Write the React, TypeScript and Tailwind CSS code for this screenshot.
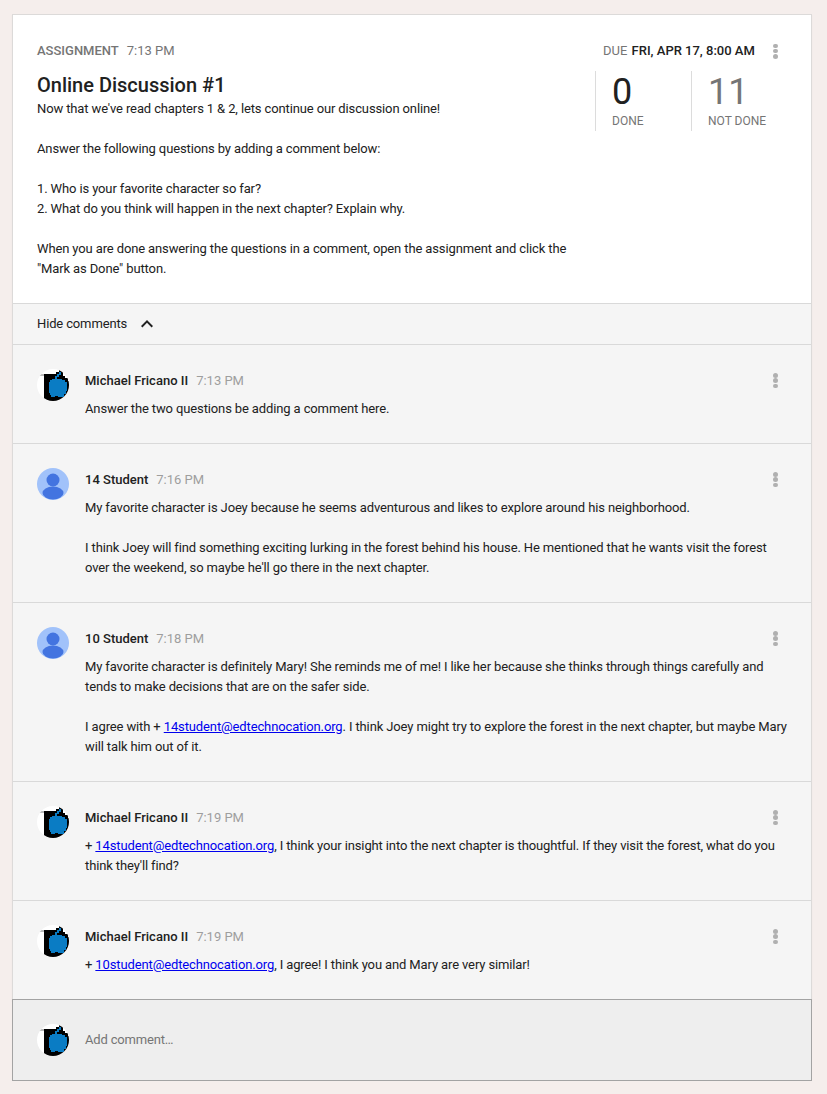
import type { ReactNode } from "react"

function Dots() {
  return (
    <div className="flex h-[15px] w-[5px] shrink-0 flex-col justify-between">
      <span className="h-[4.5px] w-[4.5px] rounded-full bg-[#b0b0b0]" />
      <span className="h-[4.5px] w-[4.5px] rounded-full bg-[#b0b0b0]" />
      <span className="h-[4.5px] w-[4.5px] rounded-full bg-[#b0b0b0]" />
    </div>
  )
}

function TeacherAvatar() {
  return (
    <svg width="32" height="32" viewBox="0 0 32 32" className="shrink-0">
      <defs>
        <clipPath id="avatar-clip">
          <circle cx="16" cy="16" r="16" />
        </clipPath>
      </defs>
      <g clipPath="url(#avatar-clip)">
        <rect width="32" height="32" fill="#ffffff" />
        <rect x="1" y="5.5" width="7" height="1" fill="#777777" />
        <path d="M7 5H19V3H22V0H26V7H28V9H31V12H32V26H30V29H26V32H7Z" fill="#000000" shapeRendering="crispEdges" />
        <path
          d="M18 7H20V5H22V3H24V6H22V8H20V10H25V11H28V13H30V22H29V25H27V28H21V27H18V28H14V26H13V24H12V13H13V11H15V10H18Z"
          fill="#0a7cc4"
          shapeRendering="crispEdges"
        />
      </g>
    </svg>
  )
}

function StudentAvatar() {
  return (
    <svg width="32" height="32" viewBox="0 0 32 32" className="shrink-0">
      <circle cx="16" cy="16" r="16" fill="#a1c2fa" />
      <circle cx="16" cy="12" r="6.5" fill="#4374e0" />
      <ellipse cx="16" cy="25" rx="10.5" ry="6.5" fill="#4374e0" />
    </svg>
  )
}

function Comment({
  name,
  time,
  student,
  children,
}: {
  name: string
  time: string
  student?: boolean
  children: ReactNode
}) {
  return (
    <div className="flex gap-4 border-b border-[#d9d9d9] pb-[24px] pl-6 pr-[33px] pt-6">
      {student ? <StudentAvatar /> : <TeacherAvatar />}
      <div className="mt-px min-w-0 flex-1">
        <div className="flex h-[21px] items-center justify-between">
          <div className="flex items-baseline gap-2">
            <span className="text-[13px] font-medium text-[#212121]">{name}</span>
            <span className="text-[13px] text-[#9e9e9e]">{time}</span>
          </div>
          <Dots />
        </div>
        <div className="-mr-[10px] mt-[8px] text-[13px] leading-[20px] tracking-[-0.125px] text-[#212121]">{children}</div>
      </div>
    </div>
  )
}

function Mention({ children }: { children: ReactNode }) {
  return <span className="text-[#0000ee] underline">{children}</span>
}

export default function App() {
  return (
    <div className="min-h-screen bg-[#f5eeec] px-3 pb-[13px] pt-[14px] font-['Roboto',sans-serif]">
      <div className="w-[800px] border border-[#dcdad9] bg-white shadow-[0_1px_1px_rgba(0,0,0,0.05)]">
        <div className="flex h-[288px] justify-between pl-6 pr-[33px] pt-[28px]">
          <div className="w-[540px]">
            <div className="flex h-[16px] items-center gap-2 text-[13px]">
              <span className="font-medium text-[#757575]">ASSIGNMENT</span>
              <span className="text-[#757575]">7:13 PM</span>
            </div>
            <h1 className="mb-[2px] mt-[14px] text-[20px] font-medium leading-[24px] text-[#212121]">Online Discussion #1</h1>
            <div className="text-[13px] leading-[20px] tracking-[-0.125px] text-[#212121]">
              <p>Now that we've read chapters 1 &amp; 2, lets continue our discussion online!</p>
              <p className="mt-[20px]">Answer the following questions by adding a comment below:</p>
              <p className="mt-[20px]">1. Who is your favorite character so far?</p>
              <p>2. What do you think will happen in the next chapter? Explain why.</p>
              <p className="mt-[20px]">
                When you are done answering the questions in a comment, open the assignment and click the "Mark as Done" button.
              </p>
            </div>
          </div>
          <div className="w-[183px]">
            <div className="flex h-[16px] items-center justify-between">
              <div className="ml-[8px] text-[13px]">
                <span className="text-[#757575]">DUE</span>{" "}
                <span className="ml-px font-medium text-[#212121]">FRI, APR 17, 8:00 AM</span>
              </div>
              <Dots />
            </div>
            <div className="mt-[12px] flex">
              <div className="h-[60px] w-[96px] border-l border-[#dcdcdc] pl-4">
                <div className="text-[36px] leading-[42px] text-[#212121]">0</div>
                <div className="text-[12px] leading-[16px] text-[#757575]">DONE</div>
              </div>
              <div className="h-[60px] w-[87px] border-l border-[#dcdcdc] pl-4">
                <div className="text-[36px] leading-[42px] text-[#757575]">11</div>
                <div className="text-[12px] leading-[16px] text-[#757575]">NOT DONE</div>
              </div>
            </div>
          </div>
        </div>

        <div className="flex h-[42px] items-center gap-2 border-y border-[#d9d9d9] bg-[#f5f5f5] pl-6">
          <span className="text-[13px] tracking-[-0.14px] text-[#212121]">Hide comments</span>
          <svg width="24" height="24" viewBox="0 0 24 24" fill="#212121">
            <path d="M12 8l-6 6 1.41 1.41L12 10.83l4.59 4.58L18 14z" />
          </svg>
        </div>

        <div className="bg-[#f5f5f5]">
          <Comment name="Michael Fricano II" time="7:13 PM">
            Answer the two questions be adding a comment here.
          </Comment>
          <Comment name="14 Student" time="7:16 PM" student>
            <p>My favorite character is Joey because he seems adventurous and likes to explore around his neighborhood.</p>
            <p className="mt-[20px]">
              I think Joey will find something exciting lurking in the forest behind his house. He mentioned that he wants visit the forest over the weekend, so maybe he'll go there in the next chapter.
            </p>
          </Comment>
          <Comment name="10 Student" time="7:18 PM" student>
            <p>
              My favorite character is definitely Mary! She reminds me of me! I like her because she thinks through things carefully and tends to make decisions that are on the safer side.
            </p>
            <p className="mt-[20px]">
              I agree with + <Mention>14student@edtechnocation.org</Mention>. I think Joey might try to explore the forest in the next chapter, but maybe Mary will talk him out of it.
            </p>
          </Comment>
          <Comment name="Michael Fricano II" time="7:19 PM">
            + <Mention>14student@edtechnocation.org</Mention>, I think your insight into the next chapter is thoughtful. If they visit the forest, what do you think they'll find?
          </Comment>
          <Comment name="Michael Fricano II" time="7:19 PM">
            + <Mention>10student@edtechnocation.org</Mention>, I agree! I think you and Mary are very similar!
          </Comment>
        </div>
      </div>
      <div className="-mt-[2px] flex h-[82px] w-[800px] items-center gap-4 border border-[#a3a3a3] bg-[#eeeeee] pl-6">
        <TeacherAvatar />
        <span className="text-[13px] tracking-[-0.17px] text-[#757575]">Add comment…</span>
      </div>
    </div>
  )
}
